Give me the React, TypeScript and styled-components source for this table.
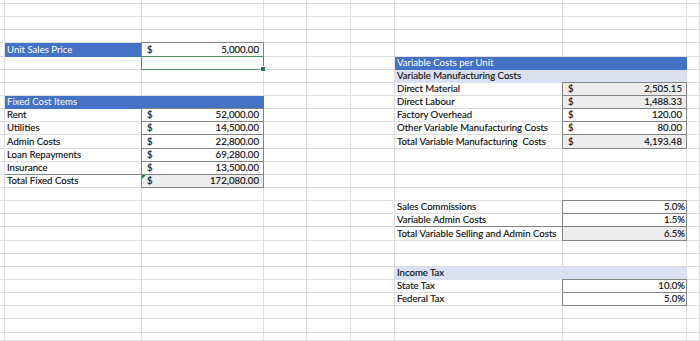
import React from "react";
import styled, { createGlobalStyle } from "styled-components";

const GRID = "#dedede";
const EDGE = "#858585";
const BLUE = "#4472c4";
const PALE = "#d9e1f2";
const SHADE = "#ededed";
const PICK = "#4f8f63";

const GlobalStyle = createGlobalStyle`
  html, body {
    margin: 0;
    padding: 0;
    background: #fff;
    overflow: hidden;
  }
  body {
    font-family: Lato, "Liberation Sans", sans-serif;
  }
`;

// columns: stub, A, B, C, D, E, F, G, H
const Sheet = styled.div`
  display: grid;
  grid-template-columns: 5px 137px 122px 43px 44px 44px 168px 124px 1fr;
  grid-template-rows: 4px repeat(25, 13.15px) 1fr;
  width: 700px;
  height: 341px;
  font-size: 9.6px;
  color: #111;
`;

const Cell = styled.div<{ $span?: number }>`
  box-sizing: border-box;
  grid-column: span ${p => p.$span ?? 1};
  display: flex;
  align-items: flex-end;
  padding: 0 2px 1px;
  border-right: 1px solid ${GRID};
  border-bottom: 1px solid ${GRID};
  line-height: 11px;
  white-space: pre;
  -webkit-text-stroke: 0.15px currentColor;
`;

const Header = styled(Cell)`
  background: ${BLUE};
  color: #fff;
  border-color: ${BLUE};
  -webkit-text-stroke: 0;
`;

const SubHeader = styled(Cell)`
  background: ${PALE};
  border-color: ${PALE};
`;

const Label = styled(Cell)<{ $total?: boolean }>`
  box-shadow: ${p => (p.$total ? `0 -1px 0 0 ${EDGE}` : "none")};
`;

const ValueBox = styled(Cell)<{ $shade?: boolean; $pct?: boolean }>`
  position: relative;
  justify-content: ${p => (p.$pct ? "flex-end" : "space-between")};
  padding: ${p => (p.$pct ? "0 1px 1px 2px" : "0 4px 1px 5px")};
  background: ${p => (p.$shade ? SHADE : "#fff")};
  border-right-color: ${EDGE};
  border-bottom-color: ${EDGE};
  box-shadow: -1px -1px 0 0 ${EDGE}, 0 -1px 0 0 ${EDGE}, -1px 0 0 0 ${EDGE};
`;

const Selected = styled(Cell)`
  position: relative;
  border-right-color: ${PICK};
  border-bottom-color: ${PICK};
  box-shadow: -1px -1px 0 0 ${PICK}, 0 -1px 0 0 ${PICK}, -1px 0 0 0 ${PICK};
`;

const FillHandle = styled.span`
  position: absolute;
  right: -3px;
  bottom: -3px;
  width: 4px;
  height: 4px;
  background: #217346;
  border: 1px solid #fff;
`;

const ErrorMark = styled.span`
  position: absolute;
  left: 0;
  top: 0;
  width: 0;
  height: 0;
  border-top: 4px solid #1e8a3c;
  border-right: 4px solid transparent;
`;

type ValueProps = { value: string; shade?: boolean; flagged?: boolean };

function Money({ value, shade, flagged }: ValueProps) {
  return (
    <ValueBox $shade={shade}>
      {flagged && <ErrorMark />}
      <span>$</span>
      <span>{value}</span>
    </ValueBox>
  );
}

function Percent({ value, shade }: ValueProps) {
  return (
    <ValueBox $pct $shade={shade}>
      {value}
    </ValueBox>
  );
}

type Placed = { col: number; span?: number; node: React.ReactElement };

const fixedCosts: [string, string][] = [
  ["Rent", "52,000.00"],
  ["Utilities", "14,500.00"],
  ["Admin Costs", "22,800.00"],
  ["Loan Repayments", "69,280.00"],
  ["Insurance", "13,500.00"],
];

const variableCosts: [string, string, boolean][] = [
  ["Direct Material", "2,505.15", true],
  ["Direct Labour", "1,488.33", true],
  ["Factory Overhead", "120.00", false],
  ["Other Variable Manufacturing Costs", "80.00", false],
];

const content: Record<number, Placed[]> = {
  4: [
    { col: 1, node: <Header>Unit Sales Price</Header> },
    { col: 2, node: <Money value="5,000.00" /> },
  ],
  5: [
    { col: 2, node: <Selected><FillHandle /></Selected> },
    { col: 6, span: 2, node: <Header $span={2}>Variable Costs per Unit</Header> },
  ],
  6: [{ col: 6, span: 2, node: <SubHeader $span={2}>Variable Manufacturing Costs</SubHeader> }],
  8: [{ col: 1, span: 2, node: <Header $span={2}>Fixed Cost Items</Header> }],
  14: [
    { col: 1, node: <Label $total>Total Fixed Costs</Label> },
    { col: 2, node: <Money value="172,080.00" shade flagged /> },
  ],
  16: [
    { col: 6, node: <Label>Sales Commissions</Label> },
    { col: 7, node: <Percent value="5.0%" /> },
  ],
  17: [
    { col: 6, node: <Label>Variable Admin Costs</Label> },
    { col: 7, node: <Percent value="1.5%" /> },
  ],
  18: [
    { col: 6, node: <Label $total>Total Variable Selling and Admin Costs</Label> },
    { col: 7, node: <Percent value="6.5%" shade /> },
  ],
  21: [{ col: 6, span: 2, node: <SubHeader $span={2}>Income Tax</SubHeader> }],
  22: [
    { col: 6, node: <Label>State Tax</Label> },
    { col: 7, node: <Percent value="10.0%" /> },
  ],
  23: [
    { col: 6, node: <Label>Federal Tax</Label> },
    { col: 7, node: <Percent value="5.0%" /> },
  ],
};

const put = (row: number, item: Placed) => {
  (content[row] = content[row] ?? []).push(item);
};

fixedCosts.forEach(([name, amount], i) => {
  put(9 + i, { col: 1, node: <Label>{name}</Label> });
  put(9 + i, { col: 2, node: <Money value={amount} /> });
});

variableCosts.forEach(([name, amount, shade], i) => {
  put(7 + i, { col: 6, node: <Label>{name}</Label> });
  put(7 + i, { col: 7, node: <Money value={amount} shade={shade} /> });
});

put(11, { col: 6, node: <Label>Total Variable Manufacturing  Costs</Label> });
put(11, { col: 7, node: <Money value="4,193.48" shade /> });

const ROWS = 27;
const COLS = 9;

function buildCells() {
  const out: React.ReactElement[] = [];
  for (let r = 0; r < ROWS; r++) {
    const items = content[r] ?? [];
    for (let c = 0; c < COLS; c++) {
      const hit = items.find(it => it.col === c);
      if (hit) {
        out.push(React.cloneElement(hit.node, { key: `${r}-${c}` }));
        c += (hit.span ?? 1) - 1;
      } else {
        out.push(<Cell key={`${r}-${c}`} />);
      }
    }
  }
  return out;
}

export default function App() {
  return (
    <>
      <GlobalStyle />
      <Sheet>{buildCells()}</Sheet>
    </>
  );
}
